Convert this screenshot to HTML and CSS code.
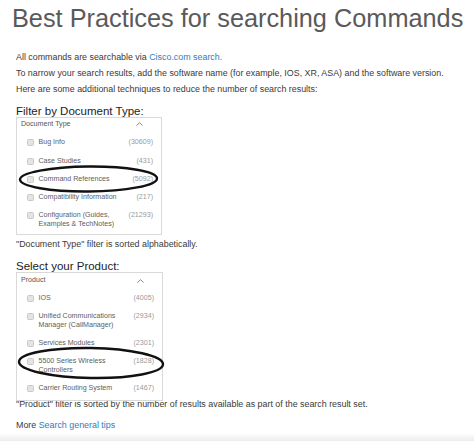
FILE: index.html
```html
<!DOCTYPE html>
<html>
<head>
<meta charset="utf-8">
<link rel="stylesheet" href="styles.css">
</head>
<body>
<div class="page">
  <h1 class="title">Best Practices for searching Commands</h1>
  <div class="intro">
    <p class="line">All commands are searchable via <a class="link" href="#">Cisco.com search.</a></p>
    <p class="line">To narrow your search results, add the software name (for example, IOS, XR, ASA) and the software version.</p>
    <p class="line">Here are some additional techniques to reduce the number of search results:</p>
  </div>

  <h2 class="subhead sub1">Filter by Document Type:</h2>
  <div class="facet">
    <div class="facet-head"><span>Document Type</span>
      <svg class="chev" width="7" height="4" viewBox="0 0 7 4"><polyline points="0.5,3.5 3.5,0.7 6.5,3.5" fill="none" stroke="#777" stroke-width="0.9"/></svg>
    </div>
    <div class="row"><span class="cb"></span><span class="lbl">Bug Info</span><span class="cnt">(30609)</span></div>
    <div class="row"><span class="cb"></span><span class="lbl">Case Studies</span><span class="cnt">(431)</span></div>
    <div class="row"><span class="cb"></span><span class="lbl">Command References</span><span class="cnt">(5092)</span></div>
    <div class="row"><span class="cb"></span><span class="lbl">Compatibility Information</span><span class="cnt">(217)</span></div>
    <div class="row last"><span class="cb"></span><span class="lbl">Configuration (Guides,<br>Examples &amp; TechNotes)</span><span class="cnt">(21293)</span></div>
    <svg class="mark" width="146" height="118" viewBox="0 0 146 118"><ellipse cx="72.5" cy="62" rx="68.5" ry="12.5" transform="rotate(-0.5 72.5 62)" fill="none" stroke="#111" stroke-width="2.4"/></svg>
  </div>
  <p class="line caption1">"Document Type" filter is sorted alphabetically.</p>

  <h2 class="subhead sub2">Select your Product:</h2>
  <div class="facet facet2">
    <div class="facet-head head2"><span>Product</span>
      <svg class="chev" width="7" height="4" viewBox="0 0 7 4"><polyline points="0.5,3.5 3.5,0.7 6.5,3.5" fill="none" stroke="#777" stroke-width="0.9"/></svg>
    </div>
    <div class="row"><span class="cb"></span><span class="lbl">IOS</span><span class="cnt">(4005)</span></div>
    <div class="row"><span class="cb"></span><span class="lbl">Unified Communications<br>Manager (CallManager)</span><span class="cnt">(2934)</span></div>
    <div class="row"><span class="cb"></span><span class="lbl">Services Modules</span><span class="cnt">(2301)</span></div>
    <div class="row"><span class="cb"></span><span class="lbl">5500 Series Wireless<br>Controllers</span><span class="cnt">(1828)</span></div>
    <div class="row"><span class="cb"></span><span class="lbl">Carrier Routing System</span><span class="cnt">(1467)</span></div>
    <svg class="mark" width="147" height="129" viewBox="0 0 147 129"><ellipse cx="75" cy="91" rx="72" ry="15" transform="rotate(1 75 91)" fill="none" stroke="#111" stroke-width="2.4"/></svg>
  </div>
  <p class="line caption2">"Product" filter is sorted by the number of results available as part of the search result set.</p>
  <p class="line more">More <a class="link" href="#">Search general tips</a></p>
  <div class="shade"></div>
</div>
</body>
</html>
```

FILE: styles.css
```css
html, body {
  margin: 0;
  padding: 0;
  background: #ffffff;
}
.page {
  width: 474px;
  height: 441px;
  overflow: hidden;
  font-family: "Liberation Sans", Arial, sans-serif;
  color: #333;
  display: flex;
  flex-direction: column;
}
.title {
  margin: 3px 0 0 12px;
  font-family: "Liberation Sans", Arial, sans-serif;
  font-weight: 400;
  font-size: 25.3px;
  line-height: 30px;
  color: #5a5a5a;
  letter-spacing: 0;
  white-space: nowrap;
}
.intro {
  margin-top: 16px;
}
.line {
  margin: 0 0 0 16px;
  font-size: 8.9px;
  line-height: 16px;
  color: #3a3a3a;
  white-space: nowrap;
}
.link {
  color: #2f7cc0;
  text-decoration: none;
}
.subhead {
  margin: 8px 0 0 16px;
  font-weight: 400;
  font-size: 11.5px;
  line-height: 12px;
  color: #222;
}
.facet {
  position: relative;
  margin-left: 16px;
  width: 146px;
  box-sizing: border-box;
  border: 1px solid #d9d9d9;
  padding-bottom: 0;
  font-size: 7.1px;
  line-height: 9px;
}
.facet2 {
  width: 147px;
  padding-bottom: 2px;
}
.facet-head {
  display: flex;
  justify-content: space-between;
  align-items: center;
  padding: 1.5px 18px 5.3px 4px;
  color: #555;
}
.head2 {
  padding-top: 3.5px;
  padding-bottom: 4.5px;
}
.chev {
  display: block;
}
.row {
  display: grid;
  grid-template-columns: 7px 1fr auto;
  column-gap: 4.5px;
  align-items: start;
  padding: 4.6px 8px 4.6px 10px;
  color: #606060;
}
.facet2 .row {
  padding-top: 4.5px;
  padding-bottom: 4.5px;
}
.cb {
  width: 7px;
  height: 7px;
  margin-top: 1px;
  box-sizing: border-box;
  border: 1px solid #c9c9c9;
  border-radius: 1.5px;
  background: #e4e4e4;
}
.cnt {
  color: #9a9a9a;
  text-align: right;
}
.mark {
  position: absolute;
  left: -1px;
  top: -1px;
  overflow: visible;
  pointer-events: none;
}
.caption1 {
  margin-top: 1px;
}
.caption2 {
  margin-top: -5px;
}
.more {
  margin-top: 5px;
}
.shade {
  flex: 1;
  background: linear-gradient(to bottom, rgba(235,235,235,0) 0%, #ececec 100%);
}
```
